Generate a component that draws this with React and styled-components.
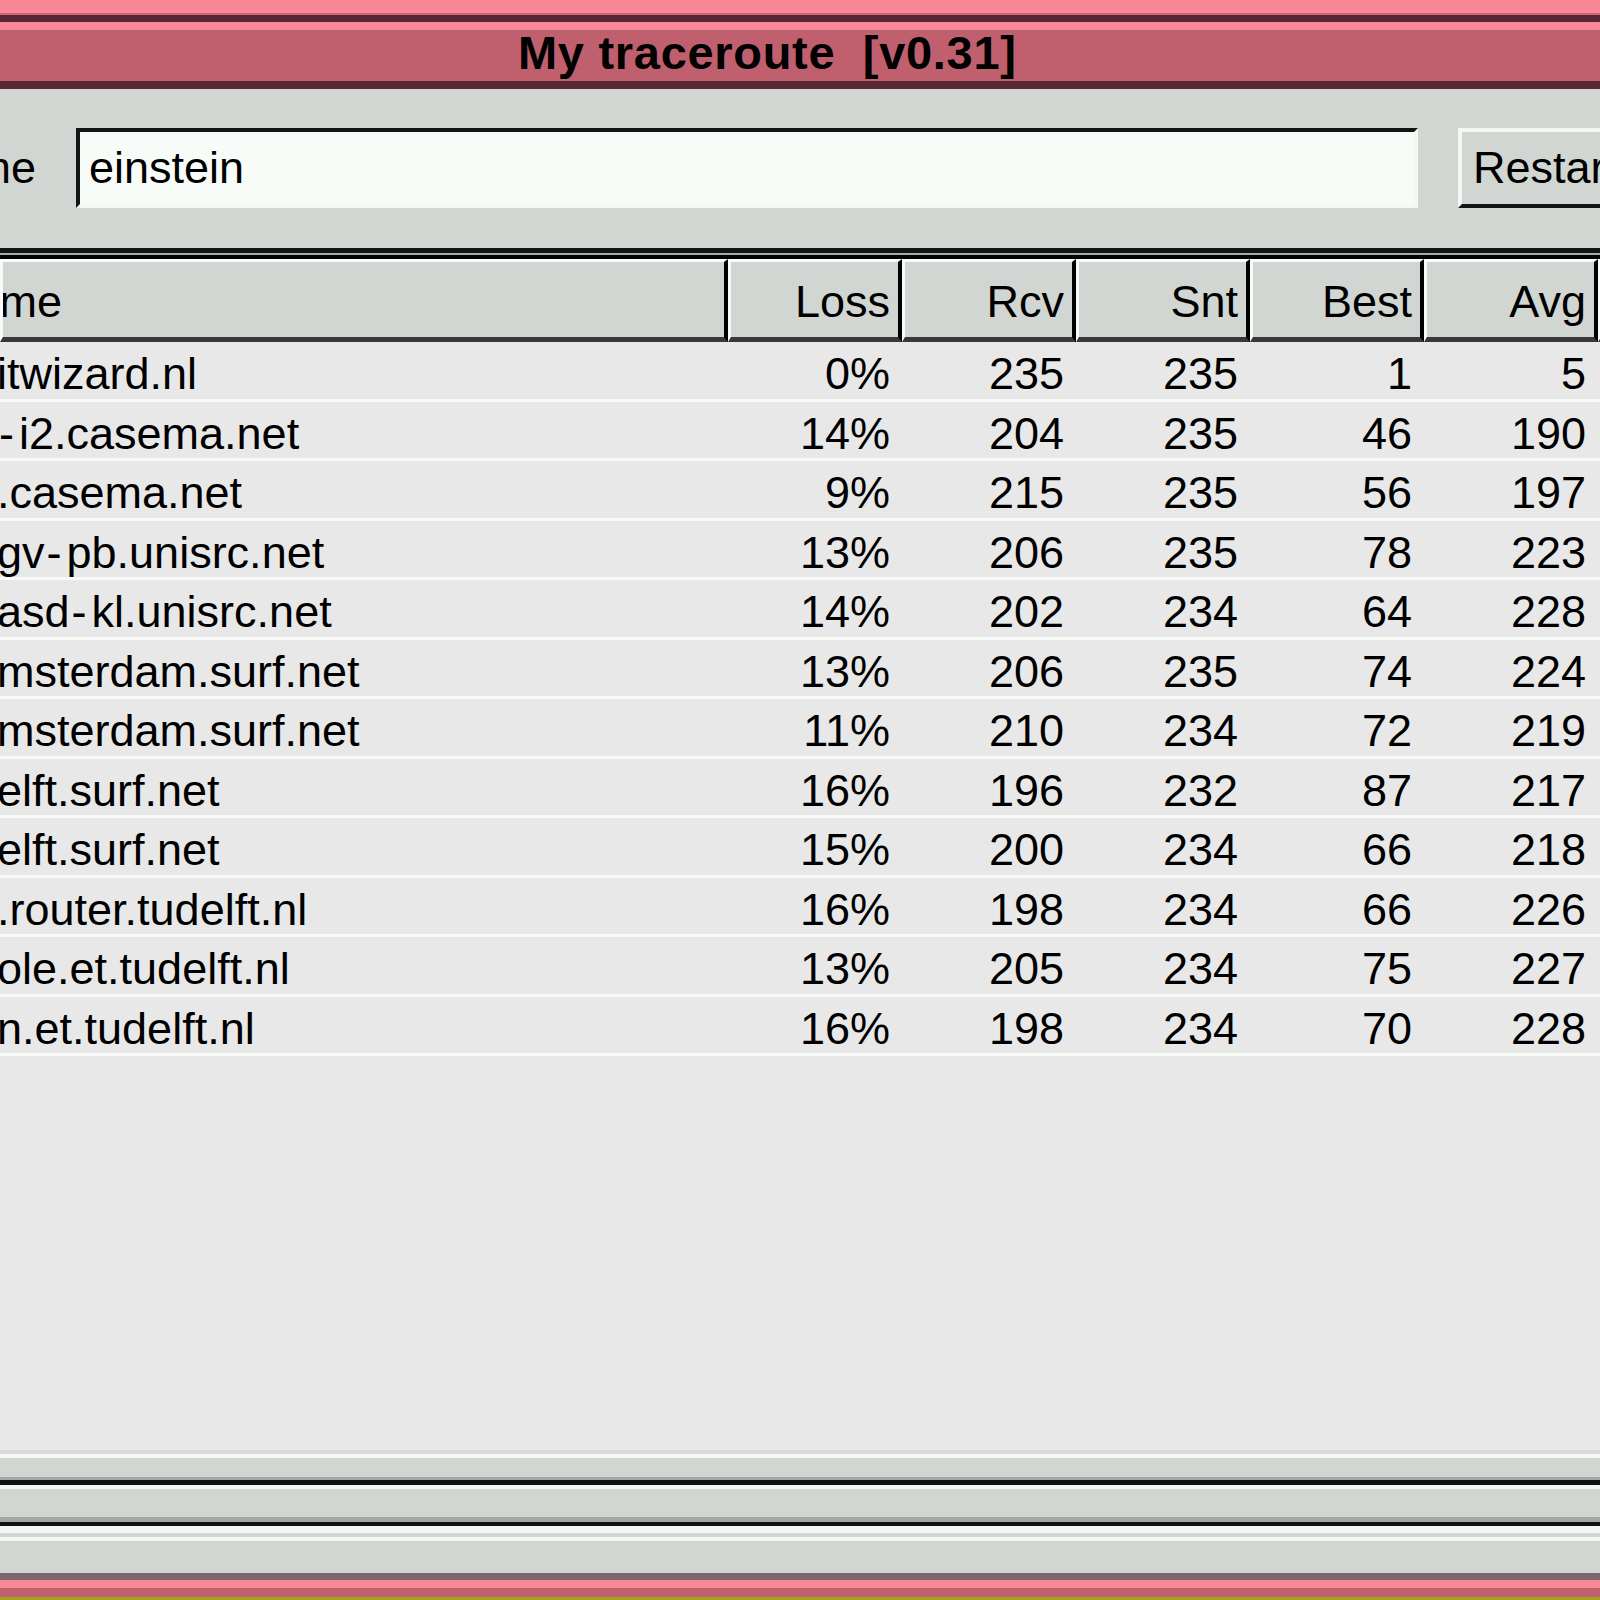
import React from 'react';
import styled, { createGlobalStyle } from 'styled-components';

const GlobalStyle = createGlobalStyle`
  html, body { margin: 0; padding: 0; overflow: hidden; background: #a4a41c; }
  body { font-family: "Liberation Sans", Arial, sans-serif; }
`;

const FONT = `"Liberation Sans", Arial, Helvetica, sans-serif`;

const Window = styled.div`
  width: 1600px;
  height: 1600px;
  overflow: hidden;
  display: flex;
  flex-direction: column;
  background: #d2d6d2;
  color: #000;
  font-family: ${FONT};
`;

const FrameTop = styled.div`
  background: #f88898;
  padding-top: 15px;
`;

const TitleBar = styled.div`
  border-top: 7px solid #582834;
  border-bottom: 8px solid #582834;
  box-shadow: 0 -2px 0 #c86a7a;
`;

const TitleHighlight = styled.div`
  border-top: 8px solid #f88898;
  background: #c0606e;
`;

const TitleText = styled.div`
  height: 51px;
  line-height: 45px;
  padding-left: 518px;
  font-size: 47px;
  font-weight: bold;
  letter-spacing: 0.7px;
  white-space: pre;
`;

const EntryRow = styled.div`
  display: flex;
  align-items: center;
  padding: 39px 0 40px;
`;

const LabelClip = styled.div`
  flex: 0 0 36px;
  height: 80px;
  overflow: hidden;
  display: flex;
  justify-content: flex-end;
  white-space: nowrap;
  font-size: 45px;
  line-height: 80px;
  margin-right: 40px;
`;

const Field = styled.div`
  flex: 0 0 1342px;
  box-sizing: border-box;
  height: 80px;
  border: 4px solid;
  border-color: #141414 #f4f8f4 #f4f8f4 #141414;
  background: #f8fcf8;
  padding-left: 9px;
  font-size: 45px;
  line-height: 72px;
`;

const Button = styled.div`
  flex: 0 0 220px;
  box-sizing: border-box;
  margin-left: 40px;
  height: 80px;
  border: 4px solid;
  border-color: #f4f8f4 #141414 #141414 #f4f8f4;
  padding-left: 11px;
  font-size: 45px;
  line-height: 72px;
  white-space: nowrap;
`;

const ListFrame = styled.div`
  border-top: 5px solid #141414;
  border-bottom: 4px solid #f4f8f4;
  padding-top: 2px;
  background: #a8aca8;
`;

const HeaderRow = styled.div`
  display: flex;
  border-top: 4px solid #000;
  background: #d2d6d2;
  overflow: hidden;
`;

const HeaderCell = styled.div`
  flex: 0 0 ${(p) => p.$w}px;
  box-sizing: border-box;
  height: 83px;
  border-top: 3px solid #f8fcf8;
  border-left: 3px solid #f8fcf8;
  border-right: 4px solid #000;
  border-bottom: 5px solid #383838;
  padding: 4px 8px 0 0;
  font-size: 45px;
  line-height: 71px;
  text-align: ${(p) => (p.$left ? 'left' : 'right')};
  text-indent: ${(p) => (p.$left ? '-146px' : '0')};
  white-space: nowrap;
  overflow: hidden;
`;

const ListBody = styled.div`
  box-sizing: border-box;
  height: 1112px;
  background: #e8e8e8;
  border-bottom: 4px solid #d8dad8;
`;

const Row = styled.div`
  display: flex;
  box-sizing: border-box;
  height: 59.5px;
  border-bottom: 3px solid #f8faf8;
  padding-top: 6px;
  font-size: 45px;
  line-height: 51.5px;
  white-space: nowrap;
  overflow: hidden;
`;

const NameCell = styled.div`
  flex: 0 0 728px;
  text-indent: -3px;
  overflow: hidden;
`;

const Hyphen = styled.span`
  display: inline-block;
  margin: 0 5px;
`;

const NumCell = styled.div`
  flex: 0 0 174px;
  box-sizing: border-box;
  padding-right: 12px;
  text-align: right;
`;

const StatusBar = styled.div`
  margin-top: 22px;
  border-top: 5px solid #101010;
  border-bottom: 4px solid #101010;
  box-shadow: 0 -3px 0 #a4a8a4;
`;

const StatusInner = styled.div`
  height: 28px;
  border-top: 4px solid #f4f8f4;
  border-bottom: 5px solid #a4a8a4;
`;

const Footer = styled.div`
  border-top: 7px solid #f4f8f4;
  padding-top: 4px;
`;

const FooterInner = styled.div`
  height: 32px;
  border-top: 4px solid #f4f8f4;
`;

const WindowBottom = styled.div`
  height: 8px;
  background: #f88898;
  border-top: 7px solid #7c6870;
  border-bottom: 9px solid #c0606e;
`;

const Desktop = styled.div`
  flex: 1;
  background: #a4a41c;
`;

const columns = ['Loss', 'Rcv', 'Snt', 'Best', 'Avg'];

const rows = [
  ['itwizard.nl', '0%', 235, 235, 1, 5],
  ['-i2.casema.net', '14%', 204, 235, 46, 190],
  ['.casema.net', '9%', 215, 235, 56, 197],
  ['gv-pb.unisrc.net', '13%', 206, 235, 78, 223],
  ['asd-kl.unisrc.net', '14%', 202, 234, 64, 228],
  ['msterdam.surf.net', '13%', 206, 235, 74, 224],
  ['msterdam.surf.net', '11%', 210, 234, 72, 219],
  ['elft.surf.net', '16%', 196, 232, 87, 217],
  ['elft.surf.net', '15%', 200, 234, 66, 218],
  ['.router.tudelft.nl', '16%', 198, 234, 66, 226],
  ['ole.et.tudelft.nl', '13%', 205, 234, 75, 227],
  ['n.et.tudelft.nl', '16%', 198, 234, 70, 228],
];

function HostName({ name }) {
  const parts = name.split('-');
  return parts.map((p, i) => (
    <React.Fragment key={i}>
      {i > 0 && <Hyphen>-</Hyphen>}
      {p}
    </React.Fragment>
  ));
}

export default function App() {
  return (
    <>
      <GlobalStyle />
      <Window>
        <FrameTop>
          <TitleBar>
            <TitleHighlight>
              <TitleText>{'My traceroute  [v0.31]'}</TitleText>
            </TitleHighlight>
          </TitleBar>
        </FrameTop>

        <EntryRow>
          <LabelClip>Hostname</LabelClip>
          <Field>einstein</Field>
          <Button>Restart</Button>
        </EntryRow>

        <ListFrame>
          <HeaderRow>
            <HeaderCell $w={728} $left>Hostname</HeaderCell>
            {columns.map((c) => (
              <HeaderCell key={c} $w={174}>{c}</HeaderCell>
            ))}
            <HeaderCell $w={174}>Worst</HeaderCell>
          </HeaderRow>
          <ListBody>
            {rows.map((r, i) => (
              <Row key={i}>
                <NameCell>
                  <HostName name={r[0]} />
                </NameCell>
                {r.slice(1).map((v, j) => (
                  <NumCell key={j}>{v}</NumCell>
                ))}
              </Row>
            ))}
          </ListBody>
        </ListFrame>

        <StatusBar>
          <StatusInner />
        </StatusBar>
        <Footer>
          <FooterInner />
        </Footer>
        <WindowBottom />
        <Desktop />
      </Window>
    </>
  );
}
